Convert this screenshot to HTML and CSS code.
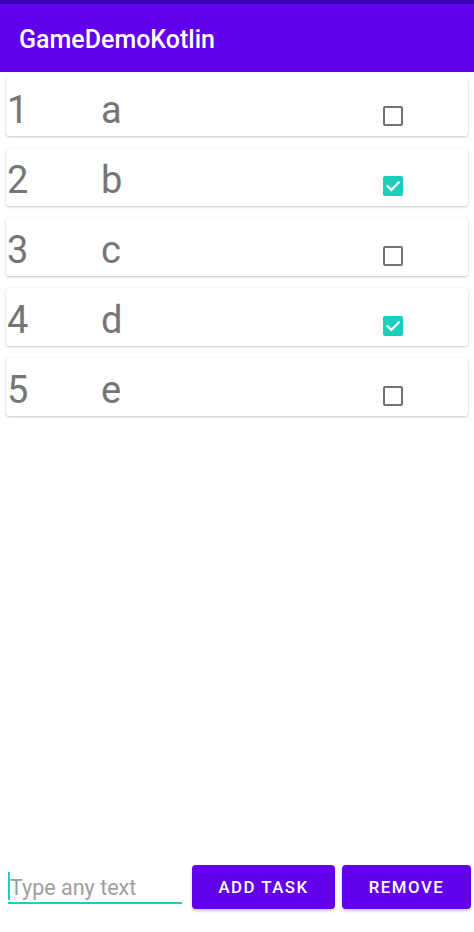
FILE: index.html
```html
<!DOCTYPE html>
<html>
<head>
<meta charset="utf-8">
<link rel="stylesheet" href="styles.css">
</head>
<body>
<div class="screen">
  <div class="statusbar"></div>
  <header class="appbar"><span class="title">GameDemoKotlin</span></header>
  <main class="list">
    <div class="card"><span class="num">1</span><span class="name">a</span><span class="cb"></span></div>
    <div class="card"><span class="num">2</span><span class="name">b</span><span class="cb checked"><svg viewBox="0 0 20 20" width="20" height="20"><path d="M4.6 10.2 L8.4 13.9 L15.6 6.6" fill="none" stroke="#fff" stroke-width="2.2" stroke-linecap="square"/></svg></span></div>
    <div class="card"><span class="num">3</span><span class="name">c</span><span class="cb"></span></div>
    <div class="card"><span class="num">4</span><span class="name">d</span><span class="cb checked"><svg viewBox="0 0 20 20" width="20" height="20"><path d="M4.6 10.2 L8.4 13.9 L15.6 6.6" fill="none" stroke="#fff" stroke-width="2.2" stroke-linecap="square"/></svg></span></div>
    <div class="card"><span class="num">5</span><span class="name">e</span><span class="cb"></span></div>
  </main>
  <footer class="bottom">
    <div class="field"><span class="cursor"></span><span class="hint">Type any text</span></div>
    <button class="btn btn-add">ADD TASK</button>
    <button class="btn btn-remove">REMOVE</button>
  </footer>
</div>
</body>
</html>
```
FILE: styles.css
```css
* { box-sizing: border-box; }
html, body { margin: 0; padding: 0; background: #fff; }
body { font-family: Roboto, "Noto Sans", sans-serif; }
.screen { display: flex; flex-direction: column; height: 932px; }
.statusbar { height: 4px; background: #3700B3; }
.appbar { height: 68px; background: #6200EE; display: flex; align-items: center; padding: 3px 0 0 19px; }
.title { color: #fff; font-size: 25px; font-weight: 500; line-height: 28px; }
.list { flex: 1; padding-top: 6px; }
.card { display: flex; align-items: flex-start; height: 58px; margin: 0 6px 12px 6px; padding-top: 10px; background: #fff; border-radius: 3px; box-shadow: 0 1px 2.5px rgba(0,0,0,0.22), 0 0 1px rgba(0,0,0,0.08); }
.num, .name { color: #757575; font-size: 38px; line-height: 44px; }
.num { width: 95px; padding-left: 1px; }
.name { flex: 1; }
.cb { width: 20px; height: 20px; margin: 18px 65px 0 0; border: 2.4px solid #737373; border-radius: 2px; display: block; }
.cb.checked { background: #1ccfbd; border: none; }
.cb svg { display: block; }
.bottom { display: flex; align-items: flex-start; height: 72px; padding-left: 8px; }
.field { position: relative; width: 174px; height: 40px; margin-top: 4px; border-bottom: 2px solid #1ccfbd; display: flex; align-items: flex-end; }
.cursor { position: absolute; left: 0; top: 8px; width: 2px; height: 28px; background: #1ccfbd; }
.hint { color: #9e9e9e; font-size: 21.5px; line-height: 28px; padding: 0 0 0 2px; }
.btn { height: 44px; margin-top: 5px; border: none; border-radius: 4px; background: #6200EE; color: #fff; font-family: Roboto, sans-serif; font-weight: 500; font-size: 16.8px; letter-spacing: 1.5px; box-shadow: 0 2px 3px rgba(0,0,0,0.2); padding: 0; }
.btn-add { width: 143px; margin-left: 10px; }
.btn-remove { width: 129px; margin-left: 7px; }
```
